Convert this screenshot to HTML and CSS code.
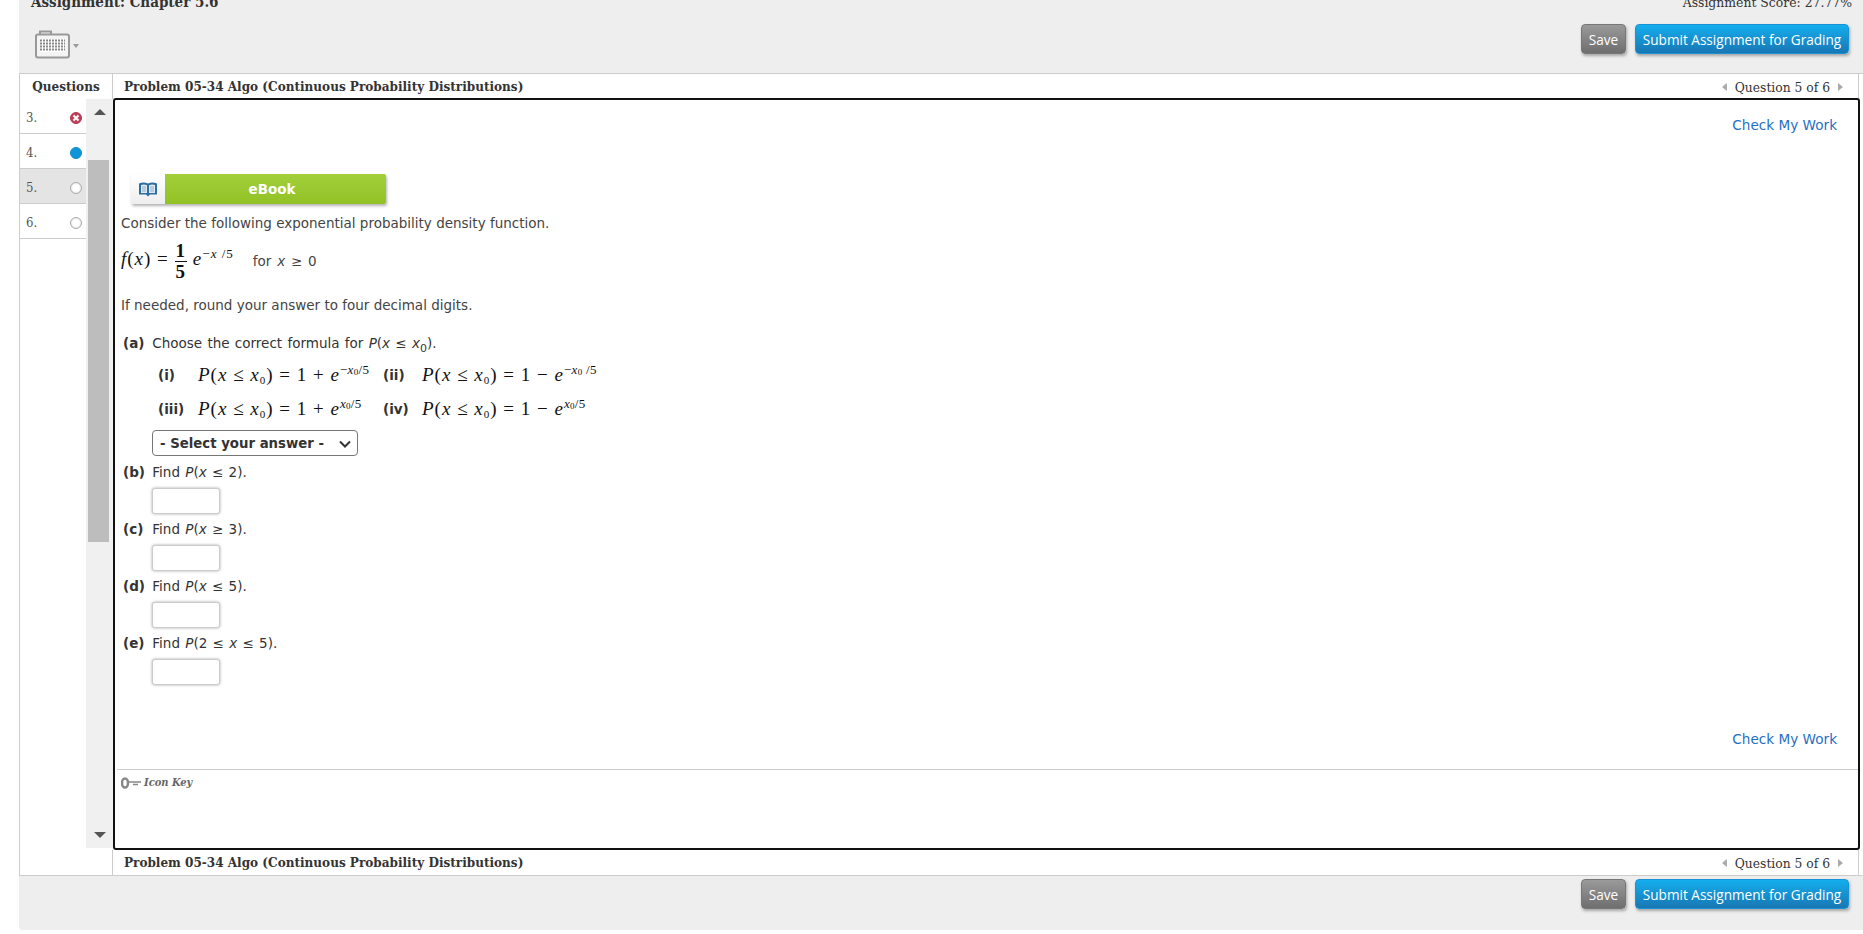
FILE: index.html
```html
<!DOCTYPE html>
<html lang="en">
<head>
    <meta charset="UTF-8">
    <title>Assignment: Chapter 5.6</title>
    <link rel="stylesheet" href="styles.css">
</head>
<body>
<div class="page">
    <div class="topbar">
        <div class="title-row">
            <strong class="title">Assignment: Chapter 5.6</strong>
            <span class="score">Assignment Score: 27.77%</span>
        </div>
        <div class="tool-row">
            <div class="keyboard">
                <svg width="36" height="30" viewBox="0 0 36 30">
                    <path d="M5 5V2.500h11V5" fill="none" stroke="#999" stroke-width="2"/>
                    <rect x="1" y="5.500" width="33" height="23" rx="2" fill="#f4f4f4" stroke="#999" stroke-width="2"/>
                    <rect x="5" y="10" width="25" height="13" fill="#fff"/>
                    <path d="M5 11.500h25M5 14.500h25M5 17.500h25M5 20.500h25" stroke="#888" stroke-width="2" stroke-dasharray="2 1"/>
                </svg>
                <span class="caret"></span>
            </div>
            <div class="actions">
                <button class="btn btn-save">Save</button>
                <button class="btn btn-submit">Submit Assignment for Grading</button>
            </div>
        </div>
    </div>

    <div class="strip strip-head">
        <div class="strip-left">Questions</div>
        <div class="strip-main">
            <b>Problem 05-34 Algo (Continuous Probability Distributions)</b>
            <span class="pager"><i class="arrow-l"></i>Question 5 of 6<i class="arrow-r"></i></span>
        </div>
    </div>

    <div class="work">
        <div class="sidebar">
            <ul class="q-list">
                <li><span>3.</span><i class="status status-wrong"><svg width="8" height="8" viewBox="0 0 8 8"><path d="M1.500 1.500l5 5M6.500 1.500l-5 5" stroke="#fff" stroke-width="2"/></svg></i></li>
                <li><span>4.</span><i class="status status-done"></i></li>
                <li class="current"><span>5.</span><i class="status"></i></li>
                <li><span>6.</span><i class="status"></i></li>
            </ul>
            <div class="scroll">
                <i class="scroll-up"></i>
                <div class="track"><div class="thumb"></div></div>
                <i class="scroll-down"></i>
            </div>
        </div>

        <div class="frame">
            <div class="check-row"><a href="#">Check My Work</a></div>
            <div class="ebook">
                <span class="ebook-icon">
                    <svg width="20" height="17" viewBox="0 0 20 17">
                        <path d="M1 2.500c3-1.500 6-1.500 9 0 3-1.500 6-1.500 9 0v11h-7l-2 2-2-2H1z" fill="#2f6f9f"/>
                        <path d="M3 4c2-.7 4-.7 6 .3V12H3zM11 4.300c2-1 4-1 6-.3v8h-6z" fill="#dfe9f2"/>
                        <path d="M4 6h4M4 8h4M4 10h4M12 6h4M12 8h4M12 10h4" stroke="#8fb0cb"/>
                    </svg>
                </span>
                <span class="ebook-label">eBook</span>
            </div>
            <p class="intro">Consider the following exponential probability density function.</p>
            <div class="density">
                <span class="math"><var>f</var>(<var>x</var>) = <span class="frac"><b>1</b><b>5</b></span> <var>e</var><sup class="exp-wide">−<var>x</var> /5</sup></span>
                <span class="for">for <em>x</em> ≥ 0</span>
            </div>
            <p class="round">If needed, round your answer to four decimal digits.</p>

            <div class="part part-a">
                <p><b class="tag">(a)</b> Choose the correct formula for <em>P</em>(<em>x</em> ≤ <em>x</em><sub>0</sub>).</p>
                <div class="choices">
                    <b>(i)</b>
                    <span class="math"><var>P</var>(<var>x</var> ≤ <var>x</var><sub>0</sub>) = 1 + <var>e</var><sup>−<var>x</var><small>0</small>/5</sup></span>
                    <b>(ii)</b>
                    <span class="math"><var>P</var>(<var>x</var> ≤ <var>x</var><sub>0</sub>) = 1 − <var>e</var><sup>−<var>x</var><small>0</small> /5</sup></span>
                    <b>(iii)</b>
                    <span class="math"><var>P</var>(<var>x</var> ≤ <var>x</var><sub>0</sub>) = 1 + <var>e</var><sup><var>x</var><small>0</small>/5</sup></span>
                    <b>(iv)</b>
                    <span class="math"><var>P</var>(<var>x</var> ≤ <var>x</var><sub>0</sub>) = 1 − <var>e</var><sup><var>x</var><small>0</small>/5</sup></span>
                </div>
                <div class="select-wrap">
                    <select class="answer-select"><option>- Select your answer -</option></select>
                    <svg class="chevron" width="12" height="8" viewBox="0 0 12 8"><path d="M1 1.500l5 5 5-5" fill="none" stroke="#333" stroke-width="2"/></svg>
                </div>
            </div>
            <div class="part part-input part-b">
                <p><b class="tag">(b)</b> Find <em>P</em>(<em>x</em> ≤ 2).</p>
                <input type="text" class="answer">
            </div>
            <div class="part part-input">
                <p><b class="tag">(c)</b> Find <em>P</em>(<em>x</em> ≥ 3).</p>
                <input type="text" class="answer">
            </div>
            <div class="part part-input">
                <p><b class="tag">(d)</b> Find <em>P</em>(<em>x</em> ≤ 5).</p>
                <input type="text" class="answer">
            </div>
            <div class="part part-input">
                <p><b class="tag">(e)</b> Find <em>P</em>(2 ≤ <em>x</em> ≤ 5).</p>
                <input type="text" class="answer">
            </div>

            <div class="check-row check-bottom"><a href="#">Check My Work</a></div>
            <div class="icon-key">
                <svg width="20" height="12" viewBox="0 0 20 12">
                    <ellipse cx="4" cy="6" rx="3" ry="4.500" fill="none" stroke="#888" stroke-width="2.500"/>
                    <path d="M7 5h13M12 7.500h5" stroke="#888" stroke-width="1.600"/>
                </svg>
                <em>Icon Key</em>
            </div>
        </div>
    </div>

    <div class="strip strip-foot">
        <div class="strip-left"></div>
        <div class="strip-main">
            <b>Problem 05-34 Algo (Continuous Probability Distributions)</b>
            <span class="pager"><i class="arrow-l"></i>Question 5 of 6<i class="arrow-r"></i></span>
        </div>
    </div>

    <div class="bottombar">
        <button class="btn btn-save">Save</button>
        <button class="btn btn-submit">Submit Assignment for Grading</button>
    </div>
</div>
</body>
</html>
```

FILE: styles.css
```css
html, body {
    margin: 0;
    background: #fff;
}
body {
    font-family: "DejaVu Sans", Verdana, sans-serif;
    font-size: 13.5px;
    color: #444;
    overflow: hidden;
}
.page {
    margin-left: 19px;
}

/* top grey panel */
.topbar {
    height: 73px;
    background: #eee;
    font-family: "DejaVu Serif Condensed", "DejaVu Serif", serif;
    font-stretch: condensed;
    overflow: hidden;
}
.title-row {
    display: flex;
    justify-content: space-between;
    height: 14px;
    margin-top: -7px;
    padding: 0 11px 0 12px;
    font-size: 13.800px;
    line-height: 18px;
    color: #333;
}
.title {
    font-size: 15px;
}
.tool-row {
    display: flex;
    justify-content: space-between;
    padding: 17px 14px 0 16px;
}
.keyboard {
    display: flex;
    align-items: center;
    gap: 2px;
    margin-top: 5px;
    height: 30px;
}
.caret {
    margin-top: 3px;
    border-left: 3px solid transparent;
    border-right: 3px solid transparent;
    border-top: 4px solid #999;
}
.actions, .bottombar {
    display: flex;
    justify-content: flex-end;
    gap: 9px;
}
.btn {
    height: 30px;
    padding: 0;
    border: 1px solid #777;
    border-radius: 4px;
    color: #fff;
    font-family: "Open Sans", sans-serif;
    font-size: 13.600px;
    box-shadow: 1px 2px 3px rgba(0, 0, 0, 0.3);
}
.btn-save {
    width: 45px;
    background: linear-gradient(#9a9a9a, #6e6e6e);
}
.btn-submit {
    width: 214px;
    border-color: #1a93d4;
    background: linear-gradient(#14aeee, #1877b4);
}

/* question title strips */
.strip {
    display: flex;
    height: 25px;
    border-top: 1px solid #ccc;
    font-family: "DejaVu Serif Condensed", "DejaVu Serif", serif;
    font-stretch: condensed;
    font-size: 13.400px;
    line-height: 24px;
    color: #333;
}
.strip-foot {
    border-top: 0;
    border-bottom: 1px solid #ccc;
}
.strip-left {
    flex: 0 0 94px;
    box-sizing: border-box;
    border-left: 1px solid #ccc;
    border-right: 1px solid #ccc;
    font-weight: bold;
    text-align: center;
}
.strip-main {
    display: flex;
    justify-content: space-between;
    flex: 1;
    margin-right: 4px;
    padding: 0 15px 0 11px;
    border-right: 1px solid #ccc;
}
.pager {
    display: flex;
    align-items: center;
    gap: 8px;
    font-size: 13.700px;
}
.arrow-l, .arrow-r {
    border-top: 4px solid transparent;
    border-bottom: 4px solid transparent;
}
.arrow-l {
    border-right: 5px solid #aaa;
}
.arrow-r {
    border-left: 5px solid #aaa;
}

/* sidebar + frame */
.work {
    display: flex;
    height: 751px;
}
.sidebar {
    display: flex;
    flex: 0 0 94px;
    box-sizing: border-box;
    border-left: 1px solid #ccc;
    font-family: "DejaVu Serif Condensed", "DejaVu Serif", serif;
    font-stretch: condensed;
}
.q-list {
    flex: 1;
    margin: 0;
    padding: 0;
    list-style: none;
}
.q-list li {
    display: flex;
    align-items: center;
    justify-content: space-between;
    box-sizing: border-box;
    height: 35px;
    padding: 3px 4px 0 6px;
    border-bottom: 1px solid #ccc;
    color: #555;
    font-size: 13px;
}
.q-list .current {
    background: #e4e4e4;
}
.status {
    display: flex;
    align-items: center;
    justify-content: center;
    box-sizing: border-box;
    width: 12px;
    height: 12px;
    border: 1px solid #aaa;
    border-radius: 50%;
    background: radial-gradient(#fff 40%, #ddd);
}
.status-wrong {
    border-color: #b0384f;
    background: #c0405a;
}
.status-done {
    border-color: #0f8bcc;
    background: #0f94d8;
}
.scroll {
    display: flex;
    flex-direction: column;
    align-items: center;
    flex: 0 0 27px;
    box-sizing: border-box;
    height: 749px;
    padding: 10px 0;
    background: #f0f0f0;
}
.scroll-up, .scroll-down {
    border-left: 6px solid transparent;
    border-right: 6px solid transparent;
}
.scroll-up {
    border-bottom: 6px solid #555;
}
.scroll-down {
    border-top: 6px solid #555;
}
.track {
    flex: 1;
    align-self: stretch;
    padding: 45px 4px 0 2px;
}
.thumb {
    height: 382px;
    background: #bdbdbd;
}
.frame {
    display: flex;
    flex-direction: column;
    flex: 0 0 auto;
    box-sizing: border-box;
    width: 1747px;
    margin-top: -1px;
    padding: 0 0 0 6px;
    border: 2px solid #111;
    border-radius: 3px;
}
.check-row {
    display: flex;
    justify-content: flex-end;
    padding: 16px 21px 0 0;
    line-height: 18px;
}
.check-row a {
    color: #1f6fc4;
    font-size: 13.600px;
    text-decoration: none;
}
.ebook {
    display: flex;
    width: 255px;
    height: 30px;
    margin: 40px 0 0 10px;
    border-radius: 2px;
    box-shadow: 1px 2px 3px rgba(0, 0, 0, 0.3);
}
.ebook-icon {
    display: flex;
    align-items: center;
    justify-content: center;
    width: 34px;
    background: linear-gradient(#fff, #eee);
}
.ebook-label {
    flex: 1;
    padding-right: 7px;
    border-radius: 0 2px 2px 0;
    background: linear-gradient(#a2cf3a, #93c226);
    color: #fff;
    font-weight: bold;
    line-height: 30px;
    text-align: center;
}
p {
    margin: 0;
}
.intro {
    margin-top: 10px;
    line-height: 18px;
}
.density {
    display: flex;
    align-items: center;
    height: 44px;
    margin-top: 7px;
}
.math {
    display: inline-block;
    font-family: "Liberation Serif", "DejaVu Serif", serif;
    font-size: 19px;
    letter-spacing: 1px;
    line-height: 22px;
    color: #111;
    white-space: nowrap;
}
.math var {
    font-style: italic;
}
.math sup {
    font-size: 13px;
    letter-spacing: 0.3px;
    line-height: 0;
    vertical-align: 7px;
}
.math .exp-wide {
    letter-spacing: 1px;
}
.math sup small {
    font-size: 9px;
    vertical-align: -1px;
}
.math sub {
    font-size: 11px;
    line-height: 0;
    vertical-align: -3px;
}
.frac {
    display: inline-flex;
    flex-direction: column;
    vertical-align: middle;
    margin: -8px 0;
    line-height: 20px;
    text-align: center;
}
.frac b:first-child {
    border-bottom: 1px solid #111;
    padding: 0 1px;
}
.for {
    margin-left: 19px;
    word-spacing: 1.500px;
}
.round {
    margin-top: 13px;
    line-height: 18px;
}
.part {
    margin-left: 2px;
    color: #333;
}
.part p {
    line-height: 18px;
    word-spacing: 1px;
}
.part-a {
    margin-top: 20px;
}
.tag {
    display: inline-block;
    width: 24px;
}
.part p sub {
    font-size: 11px;
    line-height: 0;
}
.choices {
    display: grid;
    grid-template-columns: 40px 185px 39px auto;
    justify-content: start;
    align-items: center;
    margin: 12px 0 0 35px;
    row-gap: 12px;
}
.select-wrap {
    position: relative;
    width: 206px;
    margin: 10px 0 0 29px;
}
.answer-select {
    display: block;
    appearance: none;
    width: 206px;
    height: 26px;
    padding: 0 0 0 7px;
    border: 1px solid #767676;
    border-radius: 4px;
    background: #fff;
    color: #333;
    font-family: "DejaVu Sans", sans-serif;
    font-size: 13.300px;
    font-weight: bold;
}
.chevron {
    position: absolute;
    top: 10px;
    right: 7px;
}
.part-input {
    height: 57px;
}
.answer {
    display: block;
    box-sizing: border-box;
    width: 68px;
    height: 26px;
    margin: 7px 0 0 29px;
    border: 1px solid #ccc;
    border-radius: 3px;
    box-shadow: 0 0 3px rgba(0, 0, 0, 0.35);
}
.part-b {
    margin-top: 7px;
}
.check-bottom {
    margin-top: auto;
    padding: 0 21px 21px 0;
}
.icon-key {
    display: flex;
    align-items: center;
    gap: 3px;
    height: 79px;
    margin-left: -4px;
    padding: 0 0 53px 4px;
    box-sizing: border-box;
    border-top: 1px solid #ccc;
    font-family: "DejaVu Serif Condensed", "DejaVu Serif", serif;
    font-stretch: condensed;
    font-size: 11px;
    font-weight: bold;
    color: #666;
}

/* bottom grey panel */
.bottombar {
    height: 54px;
    box-sizing: border-box;
    padding: 3px 14px 0 0;
    background: #eee;
    border-radius: 0 0 0 4px;
}
```
